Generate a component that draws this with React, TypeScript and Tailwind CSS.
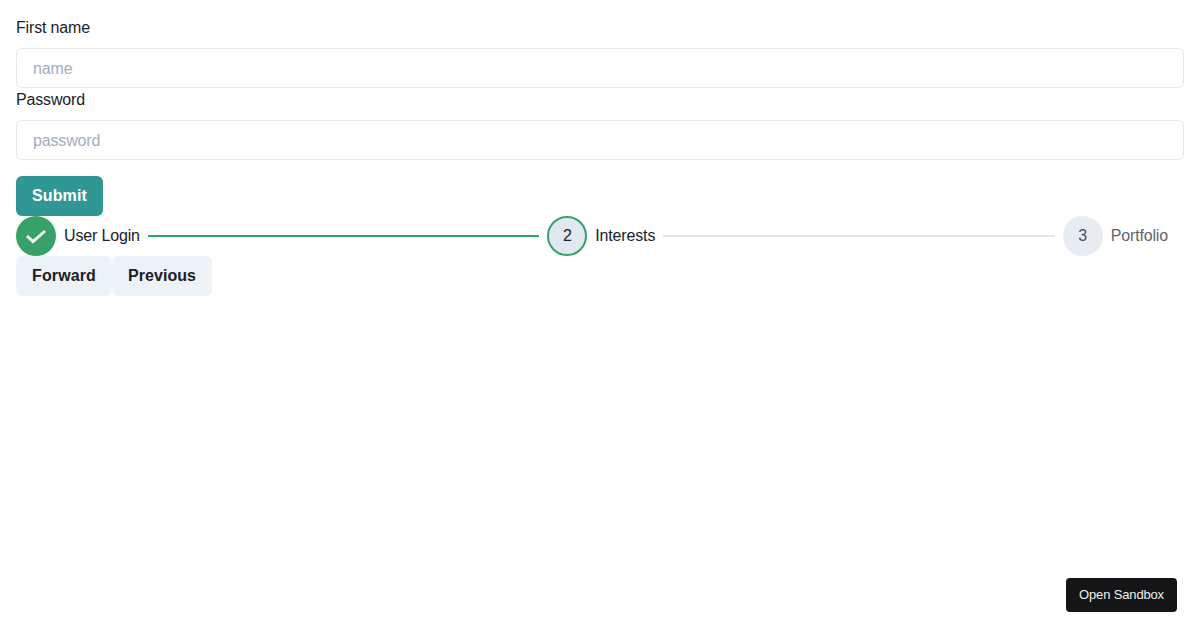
import { Fragment } from "react";

const steps = [
  { label: "User Login", state: "done" },
  { label: "Interests", state: "active" },
  { label: "Portfolio", state: "todo" },
];

function StepCircle({ index, state }: { index: number; state: string }) {
  if (state === "done") {
    return (
      <div className="flex size-10 shrink-0 items-center justify-center rounded-full bg-[#38a169] text-white">
        <svg viewBox="0 0 22 22" className="size-[22px]" fill="none" stroke="currentColor" strokeWidth="2.8" aria-hidden="true">
          <polyline points="2 11 8 16.5 20 6" />
        </svg>
      </div>
    );
  }

  if (state === "active") {
    return (
      <div className="flex size-10 shrink-0 items-center justify-center rounded-full border-2 border-[#38a169] bg-[#e2e8f0] text-[#1a202c]">
        {index + 1}
      </div>
    );
  }

  return (
    <div className="flex size-10 shrink-0 items-center justify-center rounded-full bg-[#e2e8f0] text-[#1a202c] opacity-80">
      {index + 1}
    </div>
  );
}

function Stepper() {
  return (
    <div className="flex w-full items-center pr-4 tracking-[-0.16px]">
      {steps.map((step, index) => (
        <Fragment key={step.label}>
          <div className="flex shrink-0 items-center">
            <StepCircle index={index} state={step.state} />
            <span className={step.state === "todo" ? "ml-2 text-[#1a202c] opacity-70" : "ml-2 text-[#1a202c]"}>
              {step.label}
            </span>
          </div>
          {index < steps.length - 1 && (
            <div className={step.state === "done" ? "mx-2 h-0.5 flex-1 bg-[#38a169]" : "mx-2 h-0.5 flex-1 bg-[#e2e8f0]"} />
          )}
        </Fragment>
      ))}
    </div>
  );
}

export default function App() {
  return (
    <div className="min-h-[630px] bg-white p-4 font-['Liberation_Sans',sans-serif] text-base text-[#1a202c] antialiased">
      <form>
        <label className="mb-2 block leading-6 tracking-[-0.16px]">First name</label>
        <input
          placeholder="name"
          className="block h-10 w-full rounded-md border border-[#e2e8f0] px-4 pt-0.5 tracking-[-0.16px] outline-none placeholder:text-[#a0aec0]"
        />
        <label className="mb-2 block leading-6 tracking-[-0.16px]">Password</label>
        <input
          placeholder="password"
          className="block h-10 w-full rounded-md border border-[#e2e8f0] px-4 pt-0.5 tracking-[-0.16px] outline-none placeholder:text-[#a0aec0]"
        />
        <button type="button" className="mt-4 block h-10 w-[87px] rounded-md bg-[#319795] font-semibold tracking-[0.1px] text-white">
          Submit
        </button>
      </form>

      <Stepper />

      <div className="flex">
        <button type="button" className="h-10 w-24 rounded-md bg-[#edf2f7] font-semibold tracking-[0.1px]">
          Forward
        </button>
        <button type="button" className="h-10 w-[100px] rounded-md bg-[#edf2f7] font-semibold tracking-[0.05px]">
          Previous
        </button>
      </div>

      <button
        type="button"
        className="fixed right-[23px] bottom-[18px] h-[34px] w-[111px] rounded bg-[#151518] text-[13px] tracking-[-0.15px] text-[#f0f0f0]"
      >
        Open Sandbox
      </button>
    </div>
  );
}
